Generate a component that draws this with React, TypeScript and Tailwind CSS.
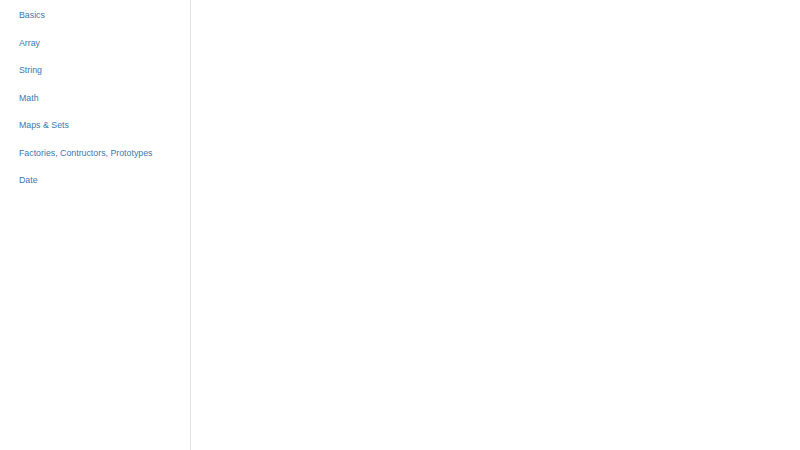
import React from "react";

const items = [
  "Basics",
  "Array",
  "String",
  "Math",
  "Maps & Sets",
  "Factories, Contructors, Prototypes",
  "Date",
];

export default function App() {
  return (
    <div className="flex h-[450px] w-[800px] bg-white" style={{ fontFamily: '"Liberation Sans", Arial, sans-serif' }}>
      <nav className="flex h-full w-[191px] flex-col border-r border-[#e0e0e0] pt-[2px]">
        {items.map((t) => (
          <a key={t} href="#" className="flex h-[27.5px] items-center pl-[19px] text-[8.8px] text-[#3a78b0]">
            {t}
          </a>
        ))}
      </nav>
      <main className="flex-1" />
    </div>
  );
}
